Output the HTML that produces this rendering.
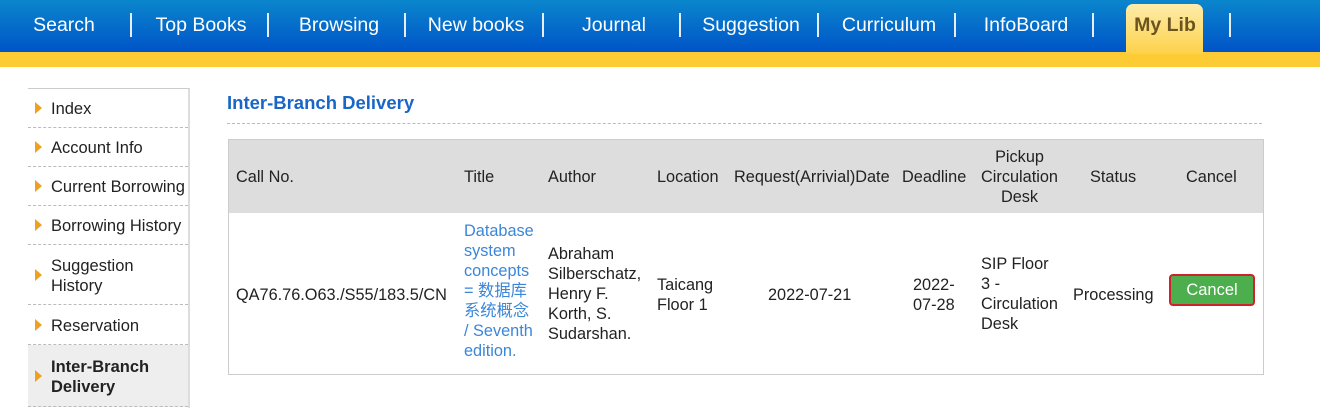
<html><head><style>
body{margin:0;width:1320px;height:407px;overflow:hidden;font-family:"Liberation Sans","Noto Sans CJK SC",sans-serif;background:#fff;position:relative}
.a{position:absolute}
.nav{left:0;top:0;width:1320px;height:52px;background:linear-gradient(#0a86cc,#0054c8)}
.yb{left:0;top:52px;width:1320px;height:15px;background:#fdcb33}
.ni{top:14px;color:#fff;font-size:19.5px;transform:translateX(-50%);white-space:nowrap}
.sp{top:13px;width:2px;height:24px;background:#e8eef8}
.sb{left:28px;top:88px;width:160px;height:319px;border-top:1px solid #ccc;border-right:2px solid #ddd}
.it{left:28px;width:160px;border-bottom:1px dashed #bbb;font-size:16.5px;color:#222;box-sizing:border-box;padding-left:23px;padding-top:2px;display:flex;align-items:center;line-height:20px}
.it:before{content:"";position:absolute;left:7px;top:50%;margin-top:-6px;border-left:7px solid #f0a020;border-top:6px solid transparent;border-bottom:6px solid transparent}
.c{font-size:16.3px;color:#222;line-height:20px}
</style></head><body>
<div class="a nav"></div><div class="a yb"></div>
<div class="a" style="left:1126px;top:4px;width:77px;height:50px;border-radius:7px 7px 0 0;background:linear-gradient(#fdecaa,#fdd24a)"></div>
<div class="a ni" style="left:64px">Search</div>
<div class="a ni" style="left:201px">Top Books</div>
<div class="a ni" style="left:339px">Browsing</div>
<div class="a ni" style="left:476px">New books</div>
<div class="a ni" style="left:614px">Journal</div>
<div class="a ni" style="left:751px">Suggestion</div>
<div class="a ni" style="left:889px">Curriculum</div>
<div class="a ni" style="left:1026px">InfoBoard</div>
<div class="a ni" style="left:1165px;color:#6b5420;font-weight:bold">My Lib</div>
<div class="a sp" style="left:130px"></div><div class="a sp" style="left:267px"></div><div class="a sp" style="left:404px"></div><div class="a sp" style="left:542px"></div><div class="a sp" style="left:679px"></div><div class="a sp" style="left:817px"></div><div class="a sp" style="left:954px"></div><div class="a sp" style="left:1092px"></div><div class="a sp" style="left:1229px"></div>
<div class="a sb"></div>
<div class="a it" style="top:89px;height:39px">Index</div>
<div class="a it" style="top:128px;height:39px">Account Info</div>
<div class="a it" style="top:167px;height:39px">Current Borrowing</div>
<div class="a it" style="top:206px;height:39px">Borrowing History</div>
<div class="a it" style="top:245px;height:60px">Suggestion<br>History</div>
<div class="a it" style="top:305px;height:40px">Reservation</div>
<div class="a it" style="top:345px;height:62px;background:#eee;font-weight:bold">Inter-Branch<br>Delivery</div>
<div class="a" style="left:227px;top:92px;font-size:18.5px;font-weight:bold;color:#1a66c8">Inter-Branch Delivery</div>
<div class="a" style="left:227px;top:123px;width:1035px;border-top:1px dashed #bbb"></div>
<div class="a" style="left:228px;top:139px;width:1034px;height:234px;border:1px solid #ccc"></div>
<div class="a" style="left:229px;top:140px;width:1034px;height:73px;background:#ddd"></div>
<div class="a c" style="left:236px;top:167px">Call No.</div>
<div class="a c" style="left:464px;top:167px">Title</div>
<div class="a c" style="left:548px;top:167px">Author</div>
<div class="a c" style="left:657px;top:167px">Location</div>
<div class="a c" style="left:734px;top:167px">Request(Arrivial)Date</div>
<div class="a c" style="left:902px;top:167px">Deadline</div>
<div class="a c" style="left:973px;top:147px;width:93px;text-align:center">Pickup Circulation Desk</div>
<div class="a c" style="left:1090px;top:167px">Status</div>
<div class="a c" style="left:1186px;top:167px">Cancel</div>
<div class="a c" style="left:236px;top:285px">QA76.76.O63./S55/183.5/CN</div>
<div class="a c" style="left:464px;top:221px;white-space:nowrap;color:#3a86d8">Database<br>system<br>concepts<br>= 数据库<br>系统概念<br>/ Seventh<br>edition.</div>
<div class="a c" style="left:548px;top:244px;width:100px">Abraham Silberschatz, Henry F. Korth, S. Sudarshan.</div>
<div class="a c" style="left:657px;top:275px">Taicang<br>Floor 1</div>
<div class="a c" style="left:768px;top:285px">2022-07-21</div>
<div class="a c" style="left:913px;top:275px">2022-<br>07-28</div>
<div class="a c" style="left:981px;top:254px;white-space:nowrap">SIP Floor<br>3 -<br>Circulation<br>Desk</div>
<div class="a c" style="left:1073px;top:285px">Processing</div>
<div class="a" style="left:1169px;top:274px;width:82px;height:28px;border:2px solid #d0202c;border-radius:4px;background:#4cae4c;color:#fff;font-size:16.5px;text-align:center;line-height:28px">Cancel</div>
</body></html>
